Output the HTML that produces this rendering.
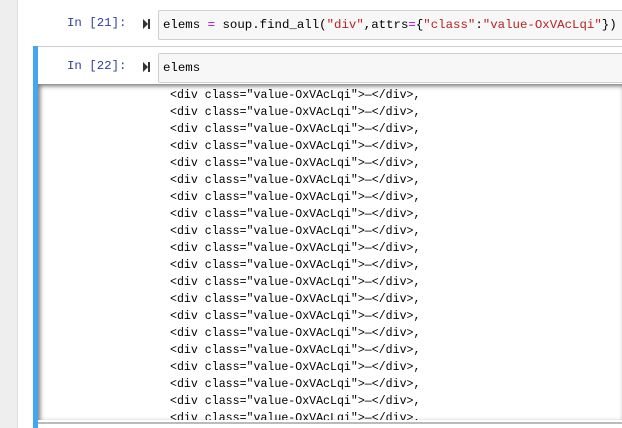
<!DOCTYPE html>
<html><head><style>
body{margin:0;width:622px;height:428px;overflow:hidden;background:#fff;font-family:"Liberation Mono","DejaVu Sans Mono",monospace;font-size:11.6px;position:relative}
.side{position:absolute;left:0;top:0;width:17px;height:428px;background:#eee;border-right:1px solid #e0e0e0}
.p{position:absolute;color:#303f9f;font-size:12.4px;font-family:"Liberation Mono","DejaVu Sans Mono",monospace}
.run{position:absolute;width:7px;height:10px}
.inp{position:absolute;left:158px;right:-5px;background:#f7f7f7;border:1px solid #cfcfcf;border-radius:2px;height:28px;line-height:28px;padding-left:4px;font-size:12.4px;color:#000;font-family:"Liberation Mono","DejaVu Sans Mono",monospace}
.out{position:absolute;left:38px;top:84px;width:584px;height:336px;overflow:hidden;box-shadow:inset 2px 2px 5px rgba(0,0,0,.55);background:#fff}
.lines{position:absolute;left:132px;top:-14px;line-height:17px;white-space:pre;color:#000;font-family:"Liberation Mono","DejaVu Sans Mono",monospace}
</style></head><body>
<div class="side"></div>
<div class="p" style="left:67px;top:16px">In [21]:</div>
<svg class="run" style="left:143px;top:19px" viewBox="0 0 7 10"><path d="M0 0L5 5L0 10Z" fill="#333"/><rect x="5" y="0" width="2" height="10" fill="#333"/></svg>
<div class="inp" style="top:10px">elems <span style="color:#a0f">=</span> soup.find_all(<span style="color:#b22">"div"</span>,attrs<span style="color:#a0f">=</span>{<span style="color:#b22">"class"</span>:<span style="color:#b22">"value-OxVAcLqi"</span>})</div>
<div style="position:absolute;left:33px;top:46px;width:589px;height:375px;border-top:1px solid #ccc;border-bottom:2px solid #bbb"></div>
<div style="position:absolute;left:33px;top:46px;width:5px;height:382px;background:#42a5f5"></div>
<div class="p" style="left:67px;top:59px">In [22]:</div>
<svg class="run" style="left:143px;top:62px" viewBox="0 0 7 10"><path d="M0 0L5 5L0 10Z" fill="#333"/><rect x="5" y="0" width="2" height="10" fill="#333"/></svg>
<div class="inp" style="top:53px">elems</div>
<div class="out"><div class="lines">&lt;div class="value-OxVAcLqi"&gt;—&lt;/div&gt;,
&lt;div class="value-OxVAcLqi"&gt;—&lt;/div&gt;,
&lt;div class="value-OxVAcLqi"&gt;—&lt;/div&gt;,
&lt;div class="value-OxVAcLqi"&gt;—&lt;/div&gt;,
&lt;div class="value-OxVAcLqi"&gt;—&lt;/div&gt;,
&lt;div class="value-OxVAcLqi"&gt;—&lt;/div&gt;,
&lt;div class="value-OxVAcLqi"&gt;—&lt;/div&gt;,
&lt;div class="value-OxVAcLqi"&gt;—&lt;/div&gt;,
&lt;div class="value-OxVAcLqi"&gt;—&lt;/div&gt;,
&lt;div class="value-OxVAcLqi"&gt;—&lt;/div&gt;,
&lt;div class="value-OxVAcLqi"&gt;—&lt;/div&gt;,
&lt;div class="value-OxVAcLqi"&gt;—&lt;/div&gt;,
&lt;div class="value-OxVAcLqi"&gt;—&lt;/div&gt;,
&lt;div class="value-OxVAcLqi"&gt;—&lt;/div&gt;,
&lt;div class="value-OxVAcLqi"&gt;—&lt;/div&gt;,
&lt;div class="value-OxVAcLqi"&gt;—&lt;/div&gt;,
&lt;div class="value-OxVAcLqi"&gt;—&lt;/div&gt;,
&lt;div class="value-OxVAcLqi"&gt;—&lt;/div&gt;,
&lt;div class="value-OxVAcLqi"&gt;—&lt;/div&gt;,
&lt;div class="value-OxVAcLqi"&gt;—&lt;/div&gt;,
&lt;div class="value-OxVAcLqi"&gt;—&lt;/div&gt;,
&lt;div class="value-OxVAcLqi"&gt;—&lt;/div&gt;,</div></div>
</body></html>
